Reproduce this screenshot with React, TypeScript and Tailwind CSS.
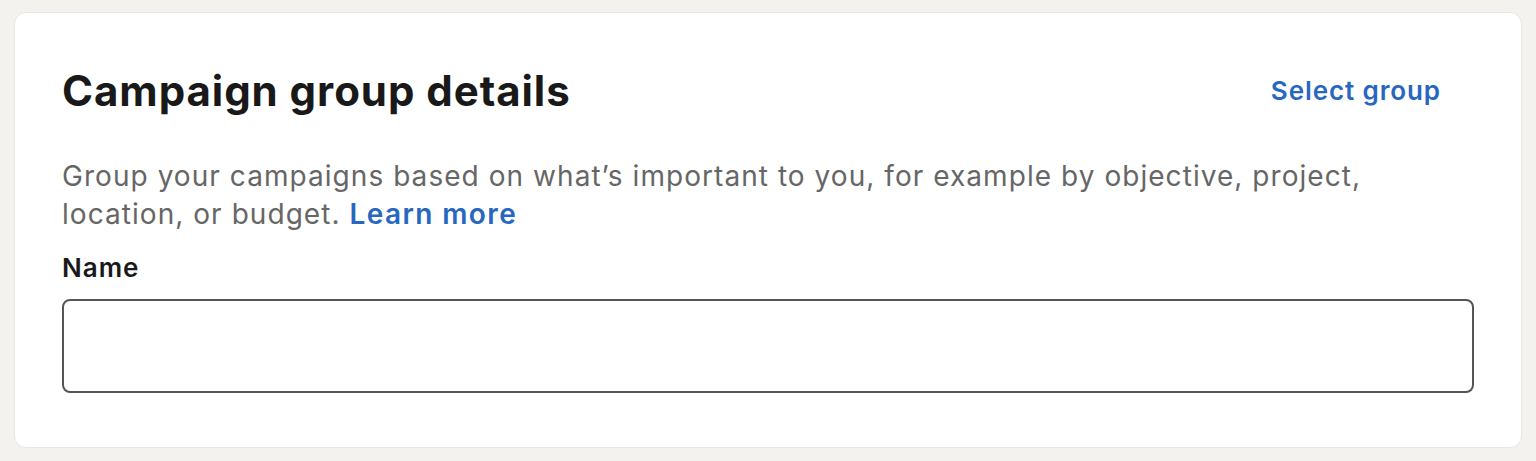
import React from "react";

export default function App() {
  return (
    <div
      className="min-h-[461px] bg-[#f3f2ef] px-[14px] pt-[12px]"
      style={{ fontFamily: "Inter, 'Noto Sans', sans-serif" }}
    >
      <div className="h-[436px] rounded-[12px] border border-[#e8e7e4] bg-white px-[47px] pt-[52px]">
        <div className="flex items-center justify-between">
          <h1 className="text-[42px] font-bold leading-[52px] tracking-[0.95px] text-[#191919]">
            Campaign group details
          </h1>
          <button className="mr-[33px] text-[26px] font-semibold leading-[32px] tracking-[0.9px] text-[#2867c0]">
            Select group
          </button>
        </div>
        <p className="mt-[40px] text-[28px] leading-[38px] tracking-[1.05px] text-[#666666]">
          Group your campaigns based on what’s important to you, for example by objective, project,
          <br />
          location, or budget.{" "}
          <a className="font-semibold tracking-[1.4px] text-[#2867c0]">Learn more</a>
        </p>
        <label className="mt-[19px] block text-[26px] font-semibold leading-[32px] tracking-[1px] text-[#191919]">
          Name
        </label>
        <input
          type="text"
          className="mt-[15px] block h-[94px] w-full rounded-[8px] border-2 border-[#555555] bg-white px-4 text-[28px] outline-none"
        />
      </div>
    </div>
  );
}
